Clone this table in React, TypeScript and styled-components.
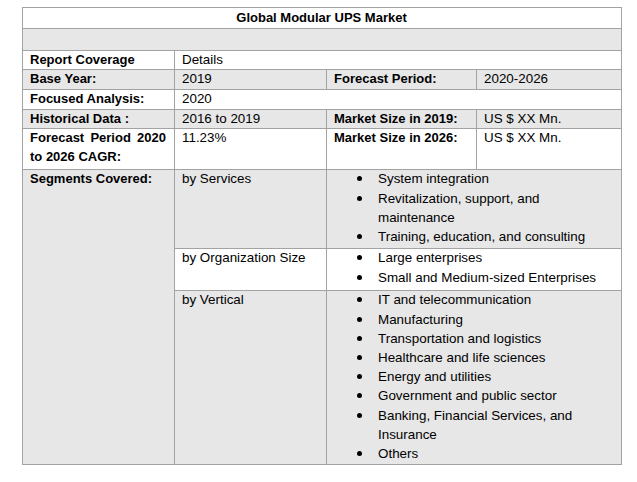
import React from 'react'
import styled, { createGlobalStyle } from 'styled-components'

const GlobalStyle = createGlobalStyle`
  body {
    margin: 0;
    background: #ffffff;
    font-family: "Liberation Sans", Arial, sans-serif;
    color: #000000;
  }
`

const Page = styled.div`
  padding: 7px 0 0 22px;
`

const Table = styled.table`
  width: 599px;
  table-layout: fixed;
  border-collapse: collapse;
  border: 1px solid #a3a3a3;
`

const Row = styled.tr<{ $h: number }>`
  height: ${({ $h }) => $h}px;
`

const Cell = styled.td<{ $shade?: boolean; $bold?: boolean; $justify?: boolean }>`
  border: 1px solid #a3a3a3;
  background: ${({ $shade }) => ($shade ? '#e7e7e7' : '#ffffff')};
  padding: 0 8px 0 7px;
  vertical-align: top;
  font-size: ${({ $bold }) => ($bold ? '13px' : '13.4px')};
  font-weight: ${({ $bold }) => ($bold ? 700 : 400)};
  line-height: 18.6px;
  text-align: ${({ $justify }) => ($justify ? 'justify' : 'left')};
  text-align-last: left;
`

const TitleCell = styled(Cell)`
  text-align: center;
  text-align-last: center;
  padding-top: 1px;
`

const ListCell = styled.td<{ $shade?: boolean }>`
  border: 1px solid #a3a3a3;
  background: ${({ $shade }) => ($shade ? '#e7e7e7' : '#ffffff')};
  padding: 0;
  vertical-align: top;
`

const List = styled.ul`
  list-style: none;
  margin: -1px 0 0;
  padding: 0 22px 0 30px;
`

const Item = styled.li`
  display: flex;
  align-items: flex-start;
  font-size: 13.4px;
  line-height: 19.2px;
`

const Dot = styled.span`
  flex: none;
  width: 5px;
  height: 5px;
  margin: 7px 16px 0 0;
  border-radius: 50%;
  background: #000000;
`

const BulletList: React.FC<{ items: string[] }> = ({ items }) => (
	<List>
		{ items.map(item => (
			<Item key={ item }>
				<Dot />
				<span>{ item }</span>
			</Item>
		)) }
	</List>
)

const services = [
	'System integration',
	'Revitalization, support, and maintenance',
	'Training, education, and consulting',
]

const orgSize = [
	'Large enterprises',
	'Small and Medium-sized Enterprises',
]

const verticals = [
	'IT and telecommunication',
	'Manufacturing',
	'Transportation and logistics',
	'Healthcare and life sciences',
	'Energy and utilities',
	'Government and public sector',
	'Banking, Financial Services, and Insurance',
	'Others',
]

const App: React.FC = () => {
	return (
		<Page>
			<GlobalStyle />
			<Table>
				<colgroup>
					<col style={{ width: 152 }} />
					<col style={{ width: 152 }} />
					<col style={{ width: 150 }} />
					<col style={{ width: 145 }} />
				</colgroup>
				<tbody>
					<Row $h={ 20 }>
						<TitleCell colSpan={ 4 } $bold>Global Modular UPS Market</TitleCell>
					</Row>
					<Row $h={ 22 }>
						<Cell colSpan={ 4 } $shade></Cell>
					</Row>
					<Row $h={ 19 }>
						<Cell $bold>Report Coverage</Cell>
						<Cell colSpan={ 3 }>Details</Cell>
					</Row>
					<Row $h={ 20 }>
						<Cell $shade $bold>Base Year:</Cell>
						<Cell $shade>2019</Cell>
						<Cell $shade $bold>Forecast Period:</Cell>
						<Cell $shade>2020-2026</Cell>
					</Row>
					<Row $h={ 19 }>
						<Cell $bold>Focused Analysis:</Cell>
						<Cell colSpan={ 3 }>2020</Cell>
					</Row>
					<Row $h={ 19 }>
						<Cell $shade $bold>Historical Data :</Cell>
						<Cell $shade>2016 to 2019</Cell>
						<Cell $shade $bold>Market Size in 2019:</Cell>
						<Cell $shade>US $ XX Mn.</Cell>
					</Row>
					<Row $h={ 41 }>
						<Cell $bold $justify>Forecast Period 2020 to 2026 CAGR:</Cell>
						<Cell>11.23%</Cell>
						<Cell $bold>Market Size in 2026:</Cell>
						<Cell>US $ XX Mn.</Cell>
					</Row>
					<Row $h={ 79 }>
						<Cell rowSpan={ 3 } $shade $bold>Segments Covered:</Cell>
						<Cell $shade>by Services</Cell>
						<ListCell colSpan={ 2 } $shade><BulletList items={ services } /></ListCell>
					</Row>
					<Row $h={ 42 }>
						<Cell>by Organization Size</Cell>
						<ListCell colSpan={ 2 }><BulletList items={ orgSize } /></ListCell>
					</Row>
					<Row $h={ 174 }>
						<Cell $shade>by Vertical</Cell>
						<ListCell colSpan={ 2 } $shade><BulletList items={ verticals } /></ListCell>
					</Row>
				</tbody>
			</Table>
		</Page>
	)
}

export default App
